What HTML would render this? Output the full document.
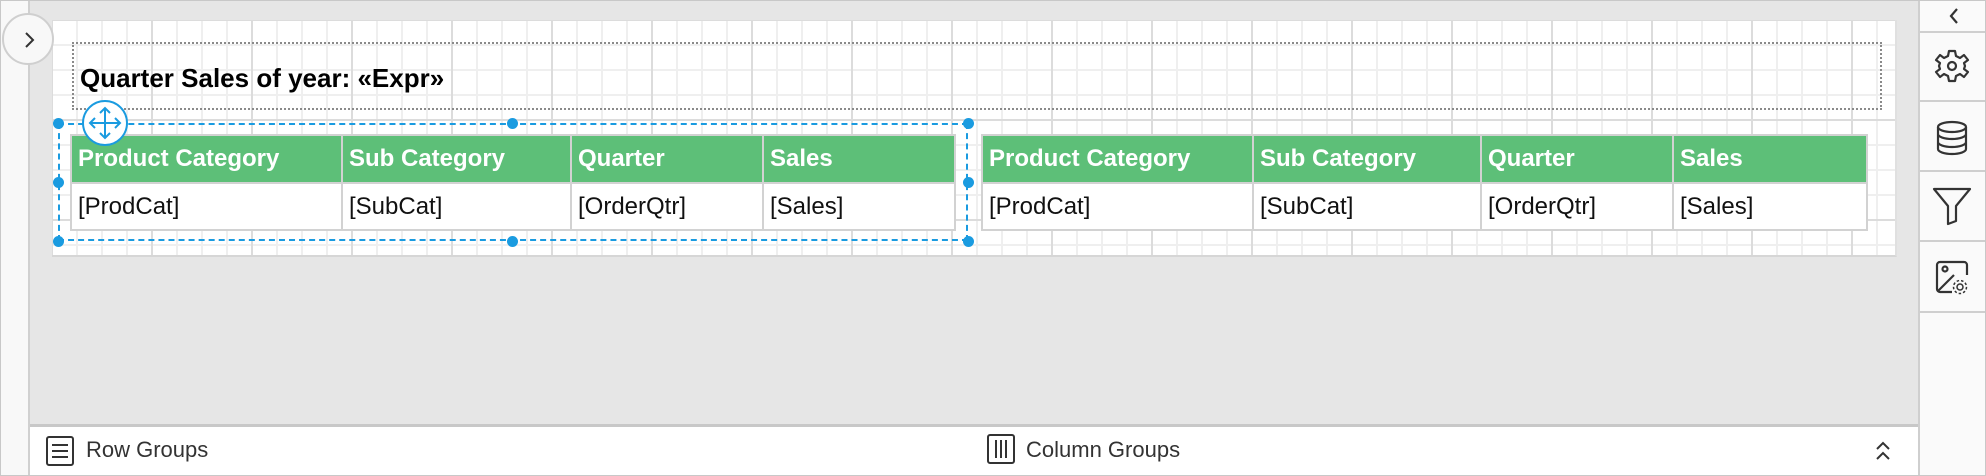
<!DOCTYPE html>
<html><head><meta charset="utf-8"><style>
*{box-sizing:border-box;margin:0;padding:0}
body{width:1986px;height:476px;overflow:hidden;position:relative;font-family:"Liberation Sans",sans-serif;background:#e6e6e6}
.abs{position:absolute}
#outer{left:0;top:0;width:1986px;height:476px;border:1px solid #c8c8c8;pointer-events:none;z-index:10}
#left{left:0;top:0;width:30px;height:476px;background:#f8f8f8;border-right:2px solid #d0d0d0}
#circle{left:2px;top:13px;width:52px;height:52px;border-radius:50%;background:#f8f8f8;border:2px solid #cfcfcf;z-index:3}
#canvas{left:52px;top:20px;width:1845px;height:237px;background-color:#fff;
background-image:linear-gradient(to right,#dcdcdc 2px,transparent 2px),linear-gradient(to bottom,#dcdcdc 2px,transparent 2px),linear-gradient(to right,#efefef 2px,transparent 2px),linear-gradient(to bottom,#efefef 2px,transparent 2px);
background-size:100px 100px,100px 100px,25px 25px,25px 25px;background-position:-1px -1px;border-bottom:2px solid #d6d6d6;border-right:2px solid #e0e0e0}
#title{left:72px;top:42px;width:1810px;height:68px;border:2px dotted #8a8a8a;font-weight:bold;font-size:26px;padding:19px 0 0 6px;color:#000}
table{position:absolute;border-collapse:collapse;background:#fff;font-size:24px;table-layout:fixed}
td{border:2px solid #d2d2d2;padding:0 6px;height:47px;white-space:nowrap;color:#111;overflow:hidden}
tr.hr td{background:#5dbf78;color:#fff;font-weight:bold;height:48px}
#right{left:1918px;top:0;width:68px;height:476px;background:#fafafa;border-left:2px solid #cfcfcf}
.sep{position:absolute;left:0;width:68px;height:2px;background:#cfcfcf}
#bottom{left:30px;top:424px;width:1888px;height:52px;background:#fff;border-top:3px solid #c8c8c8;font-size:22px;color:#333}
.hd{position:absolute;width:11px;height:11px;border-radius:50%;background:#1a9be0}
</style></head><body>
<div id="left" class="abs"></div>
<div id="circle" class="abs"><svg width="48" height="48" style="position:absolute;left:0;top:0"><path d="M22 18 L29 25 L22 32" fill="none" stroke="#333" stroke-width="2"/></svg></div>
<div id="canvas" class="abs"></div>
<div id="title" class="abs">Quarter Sales of year: «Expr»</div>

<table style="left:70px;top:134px;width:886px">
<colgroup><col style="width:271px"><col style="width:229px"><col style="width:192px"><col></colgroup>
<tr class="hr"><td>Product Category</td><td>Sub Category</td><td>Quarter</td><td>Sales</td></tr>
<tr><td>[ProdCat]</td><td>[SubCat]</td><td>[OrderQtr]</td><td>[Sales]</td></tr>
</table>
<table style="left:981px;top:134px;width:887px">
<colgroup><col style="width:271px"><col style="width:228px"><col style="width:192px"><col></colgroup>
<tr class="hr"><td>Product Category</td><td>Sub Category</td><td>Quarter</td><td>Sales</td></tr>
<tr><td>[ProdCat]</td><td>[SubCat]</td><td>[OrderQtr]</td><td>[Sales]</td></tr>
</table>

<div class="abs" style="left:58px;top:123px;width:910px;height:118px;border:2px dashed #1a9be0"></div>
<div class="hd" style="left:53px;top:118px"></div><div class="hd" style="left:507px;top:118px"></div><div class="hd" style="left:963px;top:118px"></div>
<div class="hd" style="left:53px;top:177px"></div><div class="hd" style="left:963px;top:177px"></div>
<div class="hd" style="left:53px;top:236px"></div><div class="hd" style="left:507px;top:236px"></div><div class="hd" style="left:963px;top:236px"></div>
<svg class="abs" style="left:81px;top:99px" width="48" height="48"><circle cx="24" cy="24" r="22" fill="#fff" stroke="#1a9be0" stroke-width="2"/>
<path d="M24 9 V39 M9 24 H39 M19 14 L24 9 L29 14 M19 34 L24 39 L29 34 M14 19 L9 24 L14 29 M34 19 L39 24 L34 29" fill="none" stroke="#1a9be0" stroke-width="2"/></svg>

<div id="right" class="abs">
<div class="sep" style="top:31px"></div><div class="sep" style="top:100px"></div><div class="sep" style="top:170px"></div><div class="sep" style="top:240px"></div><div class="sep" style="top:311px"></div>
<svg style="position:absolute;left:0;top:0" width="68" height="320" fill="none" stroke="#333" stroke-width="2.2">
<path d="M37 9 L31 16 L37 23"/>
<g transform="translate(32,66)"><circle r="4"/><path d="M-3 -15 L3 -15 L4 -10 L8 -8 L12 -11 L16 -6 L12 -3 L13 0 L12 3 L16 6 L12 11 L8 8 L4 10 L3 15 L-3 15 L-4 10 L-8 8 L-12 11 L-16 6 L-12 3 L-13 0 L-12 -3 L-16 -6 L-12 -11 L-8 -8 L-4 -10 Z" stroke-linejoin="round"/></g>
<g transform="translate(32,137)"><ellipse cx="0" cy="-10" rx="14" ry="5"/><path d="M-14 -10 V12 A14 5 0 0 0 14 12 V-10 M-14 -3 A14 5 0 0 0 14 -3 M-14 5 A14 5 0 0 0 14 5"/></g>
<path d="M14 189 H50 L36 206 V221 L28 224 V206 Z" stroke-linejoin="round"/>
<g transform="translate(32,277)"><path d="M6 -15 H-12 A3 3 0 0 0 -15 -12 V12 A3 3 0 0 0 -12 15 H0 M15 -12 V-2 M-15 -12 A3 3 0 0 1 -12 -15 M12 -15 A3 3 0 0 1 15 -12 M12 -15 H6 M-14 14 L2 -2"/><circle cx="-7" cy="-8" r="2.5"/><circle cx="8" cy="10" r="3" stroke-width="1.5"/><circle cx="8" cy="10" r="6.5" stroke-width="1.5" stroke-dasharray="2.5 2"/></g>
</svg>
</div>

<div id="bottom" class="abs">
<svg class="abs" style="left:15px;top:8px" width="32" height="32" fill="none" stroke="#333" stroke-width="2"><rect x="2" y="2" width="26" height="28" rx="2"/><path d="M7 10 H23 M7 16 H23 M7 22 H23"/></svg>
<div class="abs" style="left:56px;top:10px">Row Groups</div>
<svg class="abs" style="left:956px;top:6px" width="32" height="32" fill="none" stroke="#333" stroke-width="2"><rect x="2" y="2" width="26" height="28" rx="2"/><path d="M10 7 V25 M15 7 V25 M20 7 V25"/></svg>
<div class="abs" style="left:996px;top:10px">Column Groups</div>
<svg class="abs" style="left:1843px;top:12px" width="20" height="24" fill="none" stroke="#333" stroke-width="2"><path d="M4 10 L10 4 L16 10 M4 20 L10 14 L16 20"/></svg>
</div>
<div id="outer" class="abs"></div>
</body></html>
